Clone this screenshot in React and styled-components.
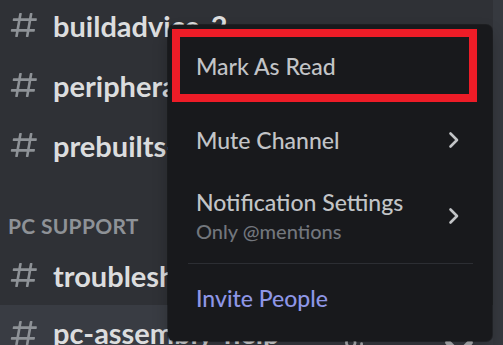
import React from 'react';
import styled, { createGlobalStyle } from 'styled-components';
import { UserPlus, ChevronDown } from 'lucide-react';

const GlobalStyle = createGlobalStyle`
  html, body {
    margin: 0;
    padding: 0;
    background: #2f3136;
    font-family: 'Lato', 'Open Sans', sans-serif;
  }
`;

const Screen = styled.div`
  position: relative;
  width: 503px;
  height: 345px;
  overflow: hidden;
  display: flex;
  background: #2f3136;
`;

const Sidebar = styled.div`
  flex: 1;
  display: flex;
  flex-direction: column;
  margin-top: -5px;
`;

const ChatEdge = styled.div`
  width: 10px;
  background: #36393f;
`;

const Channel = styled.div`
  display: flex;
  align-items: center;
  flex-shrink: 0;
  height: ${p => p.$h || 60}px;
  padding: 0 12px 0 8px;
  gap: 13px;
  background: ${p => (p.$active ? '#393c43' : 'transparent')};
  color: #dcddde;
  font-size: 29px;
  font-weight: 700;
  white-space: nowrap;
`;

const Name = styled.span`
  flex: 1;
  overflow: hidden;
`;

const Tools = styled.div`
  display: flex;
  align-items: center;
  gap: 70px;
  color: #b9bbbe;
  padding-top: 30px;
`;

const Category = styled.div`
  flex-shrink: 0;
  height: 70px;
  padding: 38px 0 0 8px;
  box-sizing: border-box;
  color: #8e9297;
  font-size: 21px;
  font-weight: 700;
  letter-spacing: 0.3px;
`;

const Menu = styled.div`
  position: absolute;
  left: 168px;
  top: 25px;
  width: 324px;
  height: 316px;
  background: #18191c;
  border-radius: 6px;
  box-shadow: 0 0 0 1px rgba(0, 0, 0, 0.35), 0 8px 16px rgba(0, 0, 0, 0.24);
  padding: 4px 15px 4px 4px;
  box-sizing: border-box;
  display: flex;
  flex-direction: column;
`;

const Item = styled.div`
  display: flex;
  flex-shrink: 0;
  align-items: center;
  justify-content: space-between;
  height: ${p => p.$h || 70}px;
  padding: 0 17px 0 ${p => (p.$marked ? 16 : 24)}px;
  box-sizing: border-box;
  border: ${p => (p.$marked ? '8px solid #ed1c27' : 'none')};
  color: ${p => p.$color || '#c2c4c7'};
  font-size: 23px;
  font-weight: 500;
`;

const Label = styled.div`
  display: flex;
  flex-direction: column;
  gap: 3px;
`;

const Sub = styled.span`
  color: #72767d;
  font-size: 20px;
`;

const Separator = styled.div`
  flex-shrink: 0;
  height: 1px;
  margin: 10px 4px 0 16px;
  background: #2c2e33;
`;

const Hash = () => (
  <svg width="32" height="32" viewBox="0 0 24 24" fill="#8e9297">
    <path
      fillRule="evenodd"
      d="M5.887 21a.5.5 0 0 1-.493-.587L6 17H2.595a.5.5 0 0 1-.492-.586l.175-1A.5.5 0 0 1 2.77 15h3.58l1.06-6H4.005a.5.5 0 0 1-.492-.586l.175-1A.5.5 0 0 1 4.18 7h3.58l.637-3.587A.5.5 0 0 1 8.889 3h.984a.5.5 0 0 1 .493.587L9.76 7h6l.637-3.587A.5.5 0 0 1 16.889 3h.984a.5.5 0 0 1 .493.587L17.76 7h3.405a.5.5 0 0 1 .492.586l-.175 1a.5.5 0 0 1-.492.414H17.41l-1.06 6h3.405a.5.5 0 0 1 .492.586l-.175 1a.5.5 0 0 1-.492.414H16l-.637 3.587a.5.5 0 0 1-.492.413h-.984a.5.5 0 0 1-.493-.587L14 17H8l-.637 3.587A.5.5 0 0 1 6.871 21H5.887zM9.41 9l-1.06 6h6l1.06-6h-6z"
    />
  </svg>
);

const Chevron = () => (
  <svg width="12" height="18" viewBox="0 0 12 18">
    <path d="M2.5 2.5 L9 9 L2.5 15.5" stroke="#c2c4c7" strokeWidth="2.6" fill="none" strokeLinecap="round" strokeLinejoin="round" />
  </svg>
);

const channels = [
  { name: 'buildadvice-2' },
  { name: 'peripherals' },
  { name: 'prebuilts-and-laptops' },
];

const support = [
  { name: 'troubleshooting' },
  { name: 'pc-assembly-help', active: true, h: 55 },
];

export default function App() {
  return (
    <Screen>
      <GlobalStyle />
      <Sidebar>
        {channels.map(c => (
          <Channel key={c.name}>
            <Hash />
            <Name>{c.name}</Name>
          </Channel>
        ))}
        <Category>PC SUPPORT</Category>
        {support.map(c => (
          <Channel key={c.name} $active={c.active} $h={c.h}>
            <Hash />
            <Name>{c.name}</Name>
            {c.active && (
              <Tools>
                <UserPlus size={26} strokeWidth={2.5} />
                <ChevronDown size={44} strokeWidth={3} />
              </Tools>
            )}
          </Channel>
        ))}
      </Sidebar>
      <ChatEdge />
      <Menu>
        <Item $marked $h={73}>Mark As Read</Item>
        <Item $h={76}>
          Mute Channel
          <Chevron />
        </Item>
        <Item $h={75}>
          <Label>
            Notification Settings
            <Sub>Only @mentions</Sub>
          </Label>
          <Chevron />
        </Item>
        <Separator />
        <Item $h={68} $color="#8e96e6">Invite People</Item>
      </Menu>
    </Screen>
  );
}
